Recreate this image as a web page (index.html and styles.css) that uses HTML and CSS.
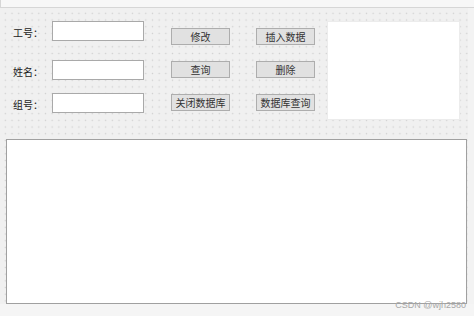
FILE: index.html
```html
<!DOCTYPE html>
<html lang="zh-CN">
  <head>
    <meta charset="UTF-8" />
    <meta name="viewport" content="width=device-width, initial-scale=1.0" />
    <title>Form1</title>
    <link rel="stylesheet" href="styles.css">
  </head>
  <body>
    <div class="window">
      <div class="titlebar"></div>
      <div class="canvas">
        <div class="top">
          <div class="fields">
            <div class="row"><span class="label">工号：</span><input class="textbox" type="text" /></div>
            <div class="row"><span class="label">姓名：</span><input class="textbox" type="text" /></div>
            <div class="row"><span class="label">组号：</span><input class="textbox" type="text" /></div>
          </div>
          <div class="buttons">
            <button class="btn">修改</button>
            <button class="btn">插入数据</button>
            <button class="btn">查询</button>
            <button class="btn">删除</button>
            <button class="btn">关闭数据库</button>
            <button class="btn">数据库查询</button>
          </div>
          <div class="picture"></div>
        </div>
        <textarea class="output"></textarea>
      </div>
      <div class="footer"></div>
      <span class="mark">CSDN @wjh2580</span>
    </div>
  </body>
</html>
```

FILE: styles.css
```css
* {
  margin: 0;
  padding: 0;
  box-sizing: border-box;
}
body {
  background: #f3f3f3;
  font-family: "Noto Sans CJK SC", "Noto Sans", sans-serif;
  font-size: 10px;
  color: #222;
  overflow: hidden;
}
.window {
  position: relative;
  width: 474px;
  height: 316px;
}
.titlebar {
  height: 8px;
  background: #f7f7f7;
  border-bottom: 1px solid #d6d6d6;
  border-left: 1px solid #d6d6d6;
}
.canvas {
  width: 468px;
  height: 296px;
  background-color: #f0f0f0;
  background-image: radial-gradient(circle, #cfcfcf 0.75px, transparent 1px);
  background-size: 6.7px 6.7px;
  background-position: 2px 2px;
}
.top {
  display: flex;
  align-items: flex-start;
}
.fields {
  margin-top: 13px;
  padding-left: 13px;
}
.row {
  display: flex;
  align-items: center;
}
.row:nth-child(2) {
  margin-top: 19px;
}
.row:nth-child(3) {
  margin-top: 13px;
}
.label {
  width: 39px;
  padding-top: 3px;
  line-height: 14px;
}
.textbox {
  width: 92px;
  height: 20px;
  background: #fff;
  border: 1px solid #a9a9a9;
  outline: none;
}
.buttons {
  display: grid;
  grid-template-columns: 59px 59px;
  grid-auto-rows: 17px;
  column-gap: 26px;
  row-gap: 16px;
  margin-top: 20px;
  margin-left: 27px;
}
.btn {
  font-family: inherit;
  font-size: 10px;
  color: #333;
  background: #e1e1e1;
  border: 1px solid #adadad;
  line-height: 14px;
}
.picture {
  width: 133px;
  height: 99px;
  margin-top: 13px;
  margin-left: 12px;
  background: #fff;
  border: 1px solid #ececec;
}
.output {
  display: block;
  width: 461px;
  height: 165px;
  margin-top: 19px;
  margin-left: 6px;
  background: #fff;
  border: 1px solid #a0a0a0;
  resize: none;
  outline: none;
}
.footer {
  height: 12px;
  background: #f5f5f5;
}
.mark {
  position: absolute;
  right: 8px;
  bottom: 6px;
  font-family: "Liberation Sans", sans-serif;
  font-size: 9px;
  line-height: 9px;
  color: #a8a8a8;
}
```
